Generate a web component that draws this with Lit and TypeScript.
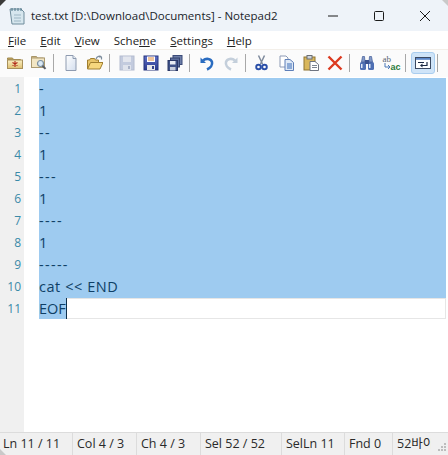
import { LitElement, html, css, svg } from "lit";
import { customElement } from "lit/decorators.js";

const grad = svg`<defs>
<linearGradient id="fold" x1="0" y1="0" x2="0" y2="1"><stop offset="0" stop-color="#faefc4"/><stop offset="1" stop-color="#dfc070"/></linearGradient>
<linearGradient id="page" x1="0" y1="0" x2="1" y2="1"><stop offset="0" stop-color="#ffffff"/><stop offset="1" stop-color="#d3deee"/></linearGradient>
<linearGradient id="disk" x1="0" y1="0" x2="0" y2="1"><stop offset="0" stop-color="#5f70c8"/><stop offset="1" stop-color="#2b3a8c"/></linearGradient>
</defs>`;

const ICONS: Record<string, unknown> = {
  favorites: svg`<path d="M.5 4.500V3h5l1 1.500h7v1z" fill="#c9a85a" stroke="#a08a50"/><rect x=".5" y="5" width="15" height="8.500" fill="url(#fold)" stroke="#a8905a"/><path d="M8 6v6M5.500 7.500l5 3M10.500 7.500l-5 3" stroke="#b02a1a" stroke-width="1.100"/>`,
  browse: svg`<path d="M.5 3V1.500h5l1 1.500h6v2H.5z" fill="#d8c088" stroke="#a8966a"/><rect x=".5" y="3" width="13" height="9.500" fill="#f2e6c4" stroke="#ab9a70"/><circle cx="9.500" cy="8.500" r="3" fill="#dbeaf6" stroke="#7c8f9f" stroke-width="1.200"/><path d="M11.500 10.700l3 3.200" stroke="#5a5f66" stroke-width="2"/>`,
  new: svg`<path d="M3 .5h7l3 3v12H3z" fill="url(#page)" stroke="#8e9bb0"/><path d="M10 .5v3h3" fill="#e6edf6" stroke="#8e9bb0"/>`,
  open: svg`<path d="M.5 14V5h2l1-1.500h4L8.500 5h3v2" fill="#e8c56a" stroke="#a07f30"/><path d="M.5 14l3-6.500H16L13 14z" fill="#f6d77e" stroke="#a07f30"/><path d="M9 4c1-3 4-3.500 5.500-2M14.500 2v2.500M14.500 2H12" fill="none" stroke="#7c8c9c" stroke-width="1.200"/>`,
  saveDis: svg`<rect x="1" y="1" width="14" height="14" fill="#c3cbde" stroke="#b4bccf"/><rect x="4" y="1.500" width="8" height="5.500" fill="#e3e6ee"/><rect x="4" y="10" width="8" height="5" fill="#dfe3ec"/><rect x="9" y="11" width="2" height="3" fill="#aab3c8"/>`,
  save: svg`<rect x="1" y="1" width="14" height="14" fill="url(#disk)" stroke="#26347c"/><rect x="4" y="1.500" width="8" height="5.500" fill="#fff"/><path d="M5 3h6M5 5h6" stroke="#e08a3c"/><rect x="4" y="10" width="8" height="5" fill="#e8e8ea"/><rect x="9" y="11" width="2" height="3" fill="#34428c"/>`,
  saveAll: svg`<rect x="6" y=".5" width="9" height="9" fill="#6d7ea8" stroke="#3a4a78"/><rect x="3.500" y="3" width="9" height="9" fill="#5a6c9c" stroke="#34446f"/><rect x="1" y="5.500" width="9.500" height="10" fill="#3f5288" stroke="#2a3866"/><rect x="3" y="6" width="5.500" height="3.500" fill="#e8ecf4"/><rect x="3" y="12" width="5.500" height="3.500" fill="#c8cedc"/>`,
  undo: svg`<path d="M1.500 2.500v5.500h5.500z" fill="#2a6cc0"/><path d="M4 5.500c3-2.500 8-2 9 1.500 .7 3-1.500 6-5 7.500" fill="none" stroke="#2a6cc0" stroke-width="2.600"/>`,
  redo: svg`<path d="M14.500 2.500v5.500h-5.500z" fill="#c4cfdb"/><path d="M12 5.500c-3-2.500-8-2-9 1.500-.7 3 1.500 6 5 7.500" fill="none" stroke="#c4cfdb" stroke-width="2.600"/>`,
  cut: svg`<path d="M3.500 .5L7.500 9M9.500 .5L5.500 9" stroke="#7e8a9c" stroke-width="1.500"/><circle cx="3.500" cy="12" r="2.300" fill="none" stroke="#2a4fa8" stroke-width="1.900"/><circle cx="9.500" cy="12" r="2.300" fill="none" stroke="#2a4fa8" stroke-width="1.900"/>`,
  copy: svg`<path d="M1 1h6l2 2v9H1z" fill="#fff" stroke="#8d9ab5"/><path d="M6 4.500h5l3.500 3v8H6z" fill="#dfe9f6" stroke="#5e7fb8"/><path d="M8 9h5M8 11h5M8 13h5" stroke="#3a6cb8"/>`,
  paste: svg`<rect x="1" y="2" width="11" height="13" fill="#d9b75c" stroke="#8f7430"/><rect x="4" y=".5" width="5" height="3.500" fill="#cfd4da" stroke="#6a6f75"/><path d="M7 6.500h5l3.500 3v6H7z" fill="#fff" stroke="#6e7480"/><path d="M9 10.500h5M9 12.500h5" stroke="#7c8490"/>`,
  del: svg`<path d="M1.500 1.500L14.500 14.500M14.500 1.500L1.500 14.500" stroke="#dc3a20" stroke-width="2.400"/>`,
  find: svg`<rect x="1" y="7" width="6" height="8" rx="1.500" fill="#4f70b4"/><rect x="9" y="7" width="6" height="8" rx="1.500" fill="#4f70b4"/><path d="M2.500 7l1-5.500h2L6 7zM10 7l.5-5.500h2l1 5.500z" fill="#8299c8" stroke="#3f5a96" stroke-width=".7"/><rect x="6" y="5" width="4" height="4" fill="#3a5290"/><rect x="2" y="9" width="1.500" height="4" fill="#dfe9f8"/><rect x="10" y="9" width="1.500" height="4" fill="#dfe9f8"/>`,
  wrap: svg`<rect x=".5" y="2.500" width="15" height="11" fill="#fff" stroke="#3c4a62"/><rect x="1" y="3" width="14" height="1.800" fill="#5a86c8"/><path d="M3 7.500h6M12 7v3.500H6" fill="none" stroke="#1d2a44" stroke-width="1.200"/><path d="M7.500 8.500L5 10.500l2.500 2z" fill="#1d2a44"/>`,
};

const TOOLBAR = [
  ["favorites", "browse"],
  ["new", "open"],
  ["saveDis", "save", "saveAll"],
  ["undo", "redo"],
  ["cut", "copy", "paste", "del"],
  ["find", "replace"],
  ["wrap"],
];
const LINES = ["-", "1", "--", "1", "---", "1", "----", "1", "-----", "cat << END"];
const STATUS: Array<[string, number]> = [
  ["Ln 11 / 11", 73],
  ["Col 4 / 3", 64],
  ["Ch 4 / 3", 64],
  ["Sel 52 / 52", 81],
  ["SelLn 11", 63],
  ["Fnd 0", 48],
  ["52바이", 38],
];

@customElement("app-root")
export class AppRoot extends LitElement {
  static styles = css`
    :host { display: flex; flex-direction: column; position: relative; width: 448px; height: 455px; overflow: hidden; background: #fff; font-family: "Open Sans", "Noto Sans", "Noto Sans CJK KR", sans-serif; color: #1a1a1a; }
    .title { height: 31px; flex: none; background: #eef3f9; display: flex; align-items: center; font-size: 11.5px; }
    .appicon { width: 16px; height: 18px; margin: 0 6px 0 9px; flex: none; }
    .ttl { flex: 1; white-space: nowrap; color: #20242a; }
    .wb { width: 46px; height: 31px; display: flex; align-items: center; justify-content: center; flex: none; }
    .wb svg { width: 12px; height: 12px; }
    .menu { height: 19px; flex: none; display: flex; align-items: center; padding-left: 8px; gap: 14px; font-size: 11.5px; background: #fff; border-bottom: 1px solid #f3efe9; box-sizing: border-box; color: #222; }
    .menu u { text-underline-offset: 1px; }
    .tb { height: 27px; flex: none; padding-left: 3px; padding-bottom: 1px; box-sizing: border-box; display: flex; align-items: center; background: #fbfbfb; }
    .btn { width: 24px; height: 22px; display: flex; align-items: center; justify-content: center; flex: none; box-sizing: border-box; }
    .btn svg { width: 16px; height: 16px; display: block; }
    .btn.active { background: #cfe4f8; border: 1px solid #a9cdef; border-radius: 3px; }
    .sep { width: 8px; flex: none; display: flex; }
    .sep i { width: 1px; height: 18px; background: #a8a8a8; margin-left: 2px; }
    .rep { display: grid; grid-template-columns: 8px 9px; grid-template-rows: 8px 8px; width: 17px; height: 16px; font-size: 9px; line-height: 8px; }
    .rep b { grid-column: 1; grid-row: 1; color: #5a6470; font-weight: 400; font-family: "Liberation Serif", serif; }
    .rep svg.arr { grid-column: 1; grid-row: 2; width: 8px; height: 8px; }
    .rep em { grid-column: 2; grid-row: 2; font-style: normal; font-weight: 700; color: #2a7a3a; font-family: "Liberation Sans", sans-serif; }
    .ed { flex: 1; display: flex; min-height: 0; font-size: 14.5px; }
    .gutter { width: 24px; flex: none; background: #f0f0f0; color: #3a8aa8; font-size: 12px; padding-top: 1px; box-sizing: border-box; }
    .gutter div { height: 22px; line-height: 22px; text-align: right; padding-right: 3px; }
    .fold { width: 15px; flex: none; }
    .text { flex: 1; padding: 1px 2px 0 0; color: #0f3f66; }
    .row { height: 22px; line-height: 22px; background: #9ecbf0; letter-spacing: .55px; white-space: pre; }
    .row.dash { letter-spacing: 1.3px; }
    .row.cur { background: #fff; box-shadow: inset 0 0 0 1px #e6e6e6; display: flex; height: 21px; }
    .row.cur span { background: #9ecbf0; border-right: 1px solid #0f2f4a; letter-spacing: 0; }
    .status { height: 23px; flex: none; background: #f0f0f0; border-top: 1px solid #dcdcdc; box-sizing: border-box; display: flex; align-items: center; font-size: 12.5px; color: #2a2a2a; }
    .st { box-sizing: border-box; height: 100%; padding-left: 3px; line-height: 22px; white-space: nowrap; border-right: 1px solid #dcdcdc; flex: none; overflow: hidden; }
    .st:not(:first-child) { padding-left: 4px; }
    .st:last-child { border-right: 0; }
    .grip { position: absolute; right: 1px; bottom: 1px; width: 12px; height: 12px; }
    .corner { position: absolute; width: 6px; height: 6px; }
    .tl { left: 0; top: 0; }
    .tr { right: 0; top: 0; }
    .bl { left: 0; bottom: 0; }
  `;

  private icon(n: string) {
    if (n === "replace")
      return html`<div class="rep"><b>ab</b><svg class="arr" viewBox="0 0 8 8"><path d="M2 0v4h5M5 2l2 2-2 2" fill="none" stroke="#4a78b8"/></svg><em>ac</em></div>`;
    return html`<svg viewBox="0 0 16 16">${grad}${ICONS[n]}</svg>`;
  }

  render() {
    return html`
      <div class="title">
        <svg class="appicon" viewBox="0 0 16 18"><path d="M1 2h11l3 3v12H3z" fill="#d6e6ee" stroke="#6f8c9c"/><path d="M3 1v3M6 1v3M9 1v3M12 1v3" stroke="#4d7488"/><path d="M5 8h7M5 11h7M5 14h7" stroke="#9db6c4"/></svg>
        <span class="ttl">test.txt [D:\\Download\\Documents] - Notepad2</span>
        <div class="wb"><svg viewBox="0 0 12 12"><path d="M1 6h10" stroke="#1a1a1a"/></svg></div>
        <div class="wb"><svg viewBox="0 0 12 12"><rect x="1.500" y="1.500" width="9" height="9" rx="1" fill="none" stroke="#1a1a1a"/></svg></div>
        <div class="wb"><svg viewBox="0 0 12 12"><path d="M1 1l10 10M11 1L1 11" stroke="#1a1a1a"/></svg></div>
      </div>
      <div class="menu">
        <span><u>F</u>ile</span><span><u>E</u>dit</span><span><u>V</u>iew</span><span>Sche<u>m</u>e</span><span><u>S</u>ettings</span><span><u>H</u>elp</span>
      </div>
      <div class="tb">
        ${TOOLBAR.map(
          (g) => html`${g.map(
            (n) => html`<div class="btn ${n === "wrap" ? "active" : ""}">${this.icon(n)}</div>`
          )}<div class="sep"><i></i></div>`
        )}
      </div>
      <div class="ed">
        <div class="gutter">${[...LINES, ""].map((_, i) => html`<div>${i + 1}</div>`)}</div>
        <div class="fold"></div>
        <div class="text">
          ${LINES.map((l) => html`<div class="row ${l.startsWith("-") ? "dash" : ""}">${l}</div>`)}
          <div class="row cur"><span>EOF</span></div>
        </div>
      </div>
      <div class="status">
        ${STATUS.map(([t, w]) => html`<div class="st" style="width:${w}px">${t}</div>`)}
      </div>
      <svg class="grip" viewBox="0 0 12 12"><g fill="#bdbdbd"><rect x="9" y="1" width="2" height="2"/><rect x="6" y="4" width="2" height="2"/><rect x="9" y="4" width="2" height="2"/><rect x="3" y="7" width="2" height="2"/><rect x="6" y="7" width="2" height="2"/><rect x="9" y="7" width="2" height="2"/></g></svg>
      <svg class="corner tl" viewBox="0 0 6 6"><path d="M0 0h6L0 6z" fill="#3a3a3a"/></svg>
      <svg class="corner tr" viewBox="0 0 6 6"><path d="M0 0h6v6z" fill="#c9c9c9"/></svg>
      <svg class="corner bl" viewBox="0 0 6 6"><path d="M0 0v6h6z" fill="#c9c9c9"/></svg>
    `;
  }
}
